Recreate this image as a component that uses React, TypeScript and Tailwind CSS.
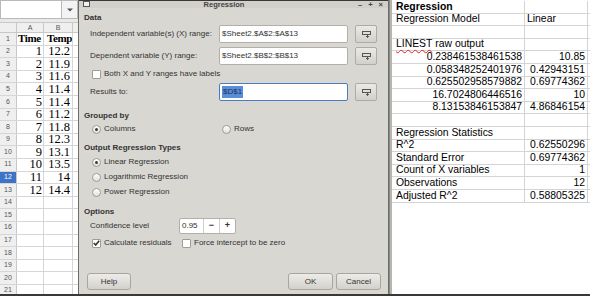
import React from "react";

const leftRows: [string, string][] = [
  ["Time", "Temp"],
  ["1", "12.2"],
  ["2", "11.9"],
  ["3", "11.6"],
  ["4", "11.4"],
  ["5", "11.4"],
  ["6", "11.2"],
  ["7", "11.8"],
  ["8", "12.3"],
  ["9", "13.1"],
  ["10", "13.5"],
  ["11", "14"],
  ["12", "14.4"],
];

const rightRows: { a: string; b: string; num?: boolean; bold?: boolean; wavy?: boolean }[] = [
  { a: "Regression", b: "", bold: true },
  { a: "Regression Model", b: "Linear" },
  { a: "", b: "" },
  { a: "LINEST raw output", b: "", wavy: true },
  { a: "0.238461538461538", b: "10.85", num: true },
  { a: "0.0583482524019 76".replace(" ", ""), b: "0.42943151", num: true },
  { a: "0.625502958579882", b: "0.69774362", num: true },
  { a: "16.7024806446516", b: "10", num: true },
  { a: "8.13153846153847", b: "4.86846154", num: true },
  { a: "", b: "" },
  { a: "Regression Statistics", b: "" },
  { a: "R^2", b: "0.62550296" },
  { a: "Standard Error", b: "0.69774362" },
  { a: "Count of X variables", b: "1" },
  { a: "Observations", b: "12" },
  { a: "Adjusted R^2", b: "0.58805325" },
];

function LeftSheet() {
  const rows = Array.from({ length: 21 }, (_, i) => i + 1);
  return (
    <div className="w-[78px] shrink-0 overflow-hidden bg-[#e9e9e7] font-['Liberation_Sans',sans-serif]">
      {/* name box */}
      <div className="flex h-[22px] items-start">
        <div className="h-[19px] w-[62px] border border-[#b9b9b9] bg-white" />
        <div className="flex h-[19px] w-[16px] items-center justify-center border-y border-r border-[#b9b9b9] bg-[#f3f3f3]">
          <svg width="6" height="4" viewBox="0 0 6 4">
            <path d="M0 0.5 L6 0.5 L3 3.5 Z" fill="#555" />
          </svg>
        </div>
      </div>
      {/* column headers */}
      <div className="flex h-[11px] border-y border-[#c8c8c8] bg-[#efefef] text-[7px] leading-[9px] text-[#555]">
        <div className="w-[17px] shrink-0 border-r border-[#c8c8c8]" />
        <div className="w-[27px] shrink-0 border-r border-[#c8c8c8] text-center">A</div>
        <div className="w-[29px] shrink-0 border-r border-[#c8c8c8] text-center">B</div>
        <div className="flex-1" />
      </div>
      {rows.map((r) => {
        const d = leftRows[r - 1];
        const sel = r === 12;
        return (
          <div key={r} className="flex h-[12.6px] border-b border-[#d6d6d6] bg-white">
            <div
              className={`flex w-[17px] shrink-0 items-center justify-center border-r border-[#c8c8c8] text-[7px] ${
                sel ? "bg-[#3d74c6] text-white" : "bg-[#efefef] text-[#555]"
              }`}
            >
              {r}
            </div>
            <div
              className={`flex w-[27px] shrink-0 items-center overflow-hidden whitespace-nowrap border-r border-[#d6d6d6] font-['Liberation_Serif',serif] leading-none text-black ${
                r === 1 ? "pl-[1px] text-[11px] font-bold tracking-[-0.4px]" : "justify-end pr-[1px] text-[12.5px]"
              }`}
            >
              {d ? d[0] : ""}
            </div>
            <div
              className={`flex w-[29px] shrink-0 items-center overflow-hidden whitespace-nowrap border-r border-[#d6d6d6] font-['Liberation_Serif',serif] leading-none text-black ${
                r === 1 ? "pl-[3px] text-[11px] font-bold tracking-[-0.4px]" : "justify-end pr-[2px] text-[12.5px]"
              }`}
            >
              {d ? d[1] : ""}
            </div>
            <div className="flex-1" />
          </div>
        );
      })}
    </div>
  );
}

function Field({ value, active, w }: { value: string; active?: boolean; w: string }) {
  return (
    <div
      className={`flex h-[18px] ${w} items-center rounded-[2px] bg-white px-[2px] text-[8px] text-[#333] ${
        active ? "border border-[#4a7cc0]" : "border border-[#b3b0a9]"
      }`}
    >
      {active ? <span className="bg-[#5a8fd8] px-[1px] text-[#1e3260]">{value}</span> : value}
    </div>
  );
}

function ShrinkButton() {
  return (
    <div className="flex h-[18px] w-[22px] items-center justify-center rounded-[2px] border border-[#aeaba4] bg-gradient-to-b from-[#eceae6] to-[#d2d0ca]">
      <svg width="9" height="7" viewBox="0 0 9 7">
        <rect x="0.5" y="0.5" width="8" height="3" fill="none" stroke="#555" strokeWidth="1" />
        <path d="M5.5 3.5 L5.5 6.5 M4 5 L5.5 6.5 L7 5" stroke="#555" strokeWidth="1" fill="none" />
      </svg>
    </div>
  );
}

function Radio({ on }: { on?: boolean }) {
  return (
    <div className="flex h-[9px] w-[9px] shrink-0 items-center justify-center rounded-full border border-[#a09d96] bg-gradient-to-b from-white to-[#e2e0dc]">
      {on && <div className="h-[3px] w-[3px] rounded-full bg-[#3c3c3c]" />}
    </div>
  );
}

function Check({ on }: { on?: boolean }) {
  return (
    <div className="flex h-[9px] w-[9px] shrink-0 items-center justify-center rounded-[1px] border border-[#a09d96] bg-white">
      {on && (
        <svg width="7" height="6" viewBox="0 0 7 6">
          <path d="M0.8 3 L2.7 5 L6.2 0.8" stroke="#333" strokeWidth="1.6" fill="none" />
        </svg>
      )}
    </div>
  );
}

function Btn({ label, w }: { label: string; w: string }) {
  return (
    <div
      className={`flex h-[17px] ${w} items-center justify-center rounded-[3px] border border-[#a9a6a0] bg-gradient-to-b from-[#eeece9] to-[#d3d1cb] text-[8px] text-[#333]`}
    >
      {label}
    </div>
  );
}

function Dialog() {
  return (
    <div className="flex w-[311px] shrink-0 flex-col border-x border-[#6d6b66] bg-[#d9d7d2] font-['Liberation_Sans',sans-serif] text-[#333]">
      {/* title bar */}
      <div className="flex h-[8px] shrink-0 items-start border-t border-[#3a3936] bg-[#d2d0cb]">
        <div className="ml-[4px] h-[6px] w-[7px] border border-[#555] bg-[#f2f1ef]" />
        <div className="flex-1 text-center text-[7.5px] font-bold leading-[7px] text-[#444]">Regression</div>
        <div className="mr-[5px] flex gap-[6px] text-[7.5px] font-bold leading-[7px] text-[#444]">
          <span>–</span>
          <span>+</span>
          <span>×</span>
        </div>
      </div>

      <div className="flex flex-1 flex-col pl-[5px] pr-[7px] text-[8px]">
        <div className="mt-[5px] h-[10px] font-bold leading-[10px]">Data</div>

        <div className="mt-[2px] flex h-[18px] items-center">
          <div className="w-[135px] pl-[6px]">Independent variable(s) (X) range:</div>
          <Field value="$Sheet2.$A$2:$A$13" w="w-[129px]" />
          <div className="ml-[7px]">
            <ShrinkButton />
          </div>
        </div>

        <div className="mt-[4px] flex h-[18px] items-center">
          <div className="w-[135px] pl-[6px]">Dependent variable (Y) range:</div>
          <Field value="$Sheet2.$B$2:$B$13" w="w-[129px]" />
          <div className="ml-[7px]">
            <ShrinkButton />
          </div>
        </div>

        <div className="mt-[4px] flex h-[10px] items-center gap-[3px] pl-[8px]">
          <Check />
          <span>Both X and Y ranges have labels</span>
        </div>

        <div className="mt-[4px] flex h-[18px] items-center">
          <div className="w-[135px] pl-[6px]">Results to:</div>
          <Field value="$D$1" active w="w-[129px]" />
          <div className="ml-[7px]">
            <ShrinkButton />
          </div>
        </div>

        <div className="mt-[10px] h-[10px] font-bold leading-[10px]">Grouped by</div>
        <div className="mt-[3px] flex h-[10px] items-center pl-[8px]">
          <div className="flex w-[130px] items-center gap-[3px]">
            <Radio on />
            <span>Columns</span>
          </div>
          <div className="flex items-center gap-[3px]">
            <Radio />
            <span>Rows</span>
          </div>
        </div>

        <div className="mt-[9px] h-[10px] font-bold leading-[10px]">Output Regression Types</div>
        <div className="mt-[4px] flex h-[10px] items-center gap-[3px] pl-[8px]">
          <Radio on />
          <span>Linear Regression</span>
        </div>
        <div className="mt-[5px] flex h-[10px] items-center gap-[3px] pl-[8px]">
          <Radio />
          <span>Logarithmic Regression</span>
        </div>
        <div className="mt-[5px] flex h-[10px] items-center gap-[3px] pl-[8px]">
          <Radio />
          <span>Power Regression</span>
        </div>

        <div className="mt-[10px] h-[10px] font-bold leading-[10px]">Options</div>
        <div className="flex h-[17px] items-center">
          <div className="w-[95px] pl-[6px]">Confidence level</div>
          <div className="flex h-[16px] items-stretch rounded-[2px] border border-[#b3b0a9] bg-white">
            <div className="flex w-[23px] items-center pl-[2px]">0.95</div>
            <div className="flex w-[16px] items-center justify-center border-l border-[#d0cec9] text-[9px] font-bold">−</div>
            <div className="flex w-[16px] items-center justify-center border-l border-[#d0cec9] text-[9px] font-bold">+</div>
          </div>
        </div>
        <div className="mt-[4px] flex h-[10px] items-center pl-[8px]">
          <div className="flex w-[90px] items-center gap-[3px]">
            <Check on />
            <span>Calculate residuals</span>
          </div>
          <div className="flex items-center gap-[3px]">
            <Check />
            <span>Force intercept to be zero</span>
          </div>
        </div>

        <div className="flex-1" />
        <div className="mb-[4px] flex items-center pl-[3px]">
          <Btn label="Help" w="w-[44px]" />
          <div className="flex-1" />
          <div className="flex gap-[3px]">
            <Btn label="OK" w="w-[45px]" />
            <Btn label="Cancel" w="w-[45px]" />
          </div>
        </div>
      </div>
    </div>
  );
}

function RightSheet() {
  return (
    <div className="flex flex-1 overflow-hidden bg-white font-['Liberation_Sans',sans-serif] text-[10.4px] text-black">
      <div className="w-[3px] shrink-0 border-l border-[#8a8a8a] bg-[#b6b4af]" />
      <div className="flex flex-1 flex-col pt-[1px]">
        {rightRows.map((r, i) => (
          <div key={i} className="flex h-[12.6px] border-b border-[#d4d4d4] leading-none">
            <div
              className={`flex w-[133px] shrink-0 items-center whitespace-nowrap border-r border-[#d4d4d4] ${
                r.num ? "justify-end pr-[2px]" : "pl-[4px]"
              } ${r.bold ? "font-bold" : ""}`}
            >
              {r.wavy ? (
                <>
                  <span className="underline decoration-[#e02020] decoration-wavy decoration-[1px] underline-offset-[2px]">
                    LINEST
                  </span>
                  &nbsp;raw output
                </>
              ) : (
                r.a
              )}
            </div>
            <div
              className={`flex w-[63px] shrink-0 items-center whitespace-nowrap border-r border-[#d4d4d4] ${
                r.b === "Linear" ? "pl-[2px]" : "justify-end pr-[2px]"
              }`}
            >
              {r.b}
            </div>
          </div>
        ))}
      </div>
    </div>
  );
}

export default function App() {
  return (
    <div className="flex h-[296px] w-[590px] flex-col overflow-hidden bg-white">
      <div className="flex min-h-0 flex-1">
        <LeftSheet />
        <Dialog />
        <RightSheet />
      </div>
      <div className="h-[2px] shrink-0 bg-[#3a3936]" />
    </div>
  );
}
